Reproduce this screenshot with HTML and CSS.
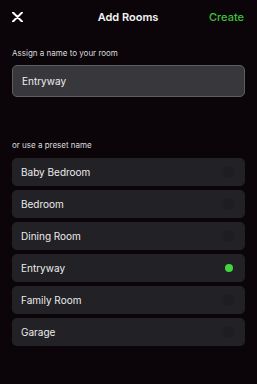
FILE: index.html
```html
<!DOCTYPE html>
<html>
<head>
<meta charset="utf-8">
<link rel="stylesheet" href="styles.css">
</head>
<body>
<div class="screen">
  <header class="topbar">
    <span class="close">
      <svg width="11" height="10" viewBox="0 0 11 10"><path d="M1 0.5 L10 9.5 M10 0.5 L1 9.5" stroke="#fff" stroke-width="2" stroke-linecap="round"/></svg>
    </span>
    <span class="title">Add Rooms</span>
    <span class="create">Create</span>
  </header>
  <div class="label first">Assign a name to your room</div>
  <div class="input">Entryway</div>
  <div class="label second">or use a preset name</div>
  <ul class="list">
    <li class="row"><span>Baby Bedroom</span><i class="radio"></i></li>
    <li class="row"><span>Bedroom</span><i class="radio"></i></li>
    <li class="row"><span>Dining Room</span><i class="radio"></i></li>
    <li class="row"><span>Entryway</span><i class="radio on"></i></li>
    <li class="row"><span>Family Room</span><i class="radio"></i></li>
    <li class="row"><span>Garage</span><i class="radio"></i></li>
  </ul>
</div>
</body>
</html>
```
FILE: styles.css
```css
html, body {
  margin: 0;
  padding: 0;
  background: #0b050a;
}
.screen {
  width: 257px;
  height: 384px;
  background: #0b050a;
  font-family: Inter, "Noto Sans", sans-serif;
  color: #ececec;
  padding: 0 12px 0 12px;
  box-sizing: border-box;
}
.topbar {
  display: flex;
  align-items: center;
  justify-content: space-between;
  height: 34px;
}
.close {
  width: 40px;
  display: flex;
  align-items: center;
}
.close svg { display: block; margin-top: -1px; }
.title {
  font-size: 11px;
  font-weight: 600;
  color: #f2f2f2;
}
.create {
  width: 40px;
  text-align: right;
  font-size: 11px;
  font-weight: 500;
  color: #3cc23c;
  margin-right: 1px;
}
.label {
  font-size: 8px;
  color: #dcdcdc;
}
.label.first { margin-top: 14px; }
.input {
  margin-top: 7px;
  height: 32px;
  box-sizing: border-box;
  border: 1px solid #5e5d62;
  border-radius: 5px;
  background: #38373b;
  display: flex;
  align-items: center;
  padding-left: 9px;
  font-size: 10px;
  color: #eeeeee;
}
.label.second { margin-top: 43px; }
.list {
  list-style: none;
  margin: 8px 0 0 0;
  padding: 0;
  display: flex;
  flex-direction: column;
  gap: 4px;
}
.row {
  height: 28px;
  border-radius: 5px;
  background: #222125;
  display: flex;
  align-items: center;
  justify-content: space-between;
  padding: 0 10px 0 9px;
  font-size: 10px;
  color: #ececec;
}
.radio {
  width: 12px;
  height: 12px;
  border-radius: 50%;
  background: #1e1d21;
  display: flex;
  align-items: center;
  justify-content: center;
}
.radio.on { background: transparent; }
.radio.on::after {
  content: "";
  width: 8px;
  height: 8px;
  border-radius: 50%;
  background: #41d63c;
}
```
